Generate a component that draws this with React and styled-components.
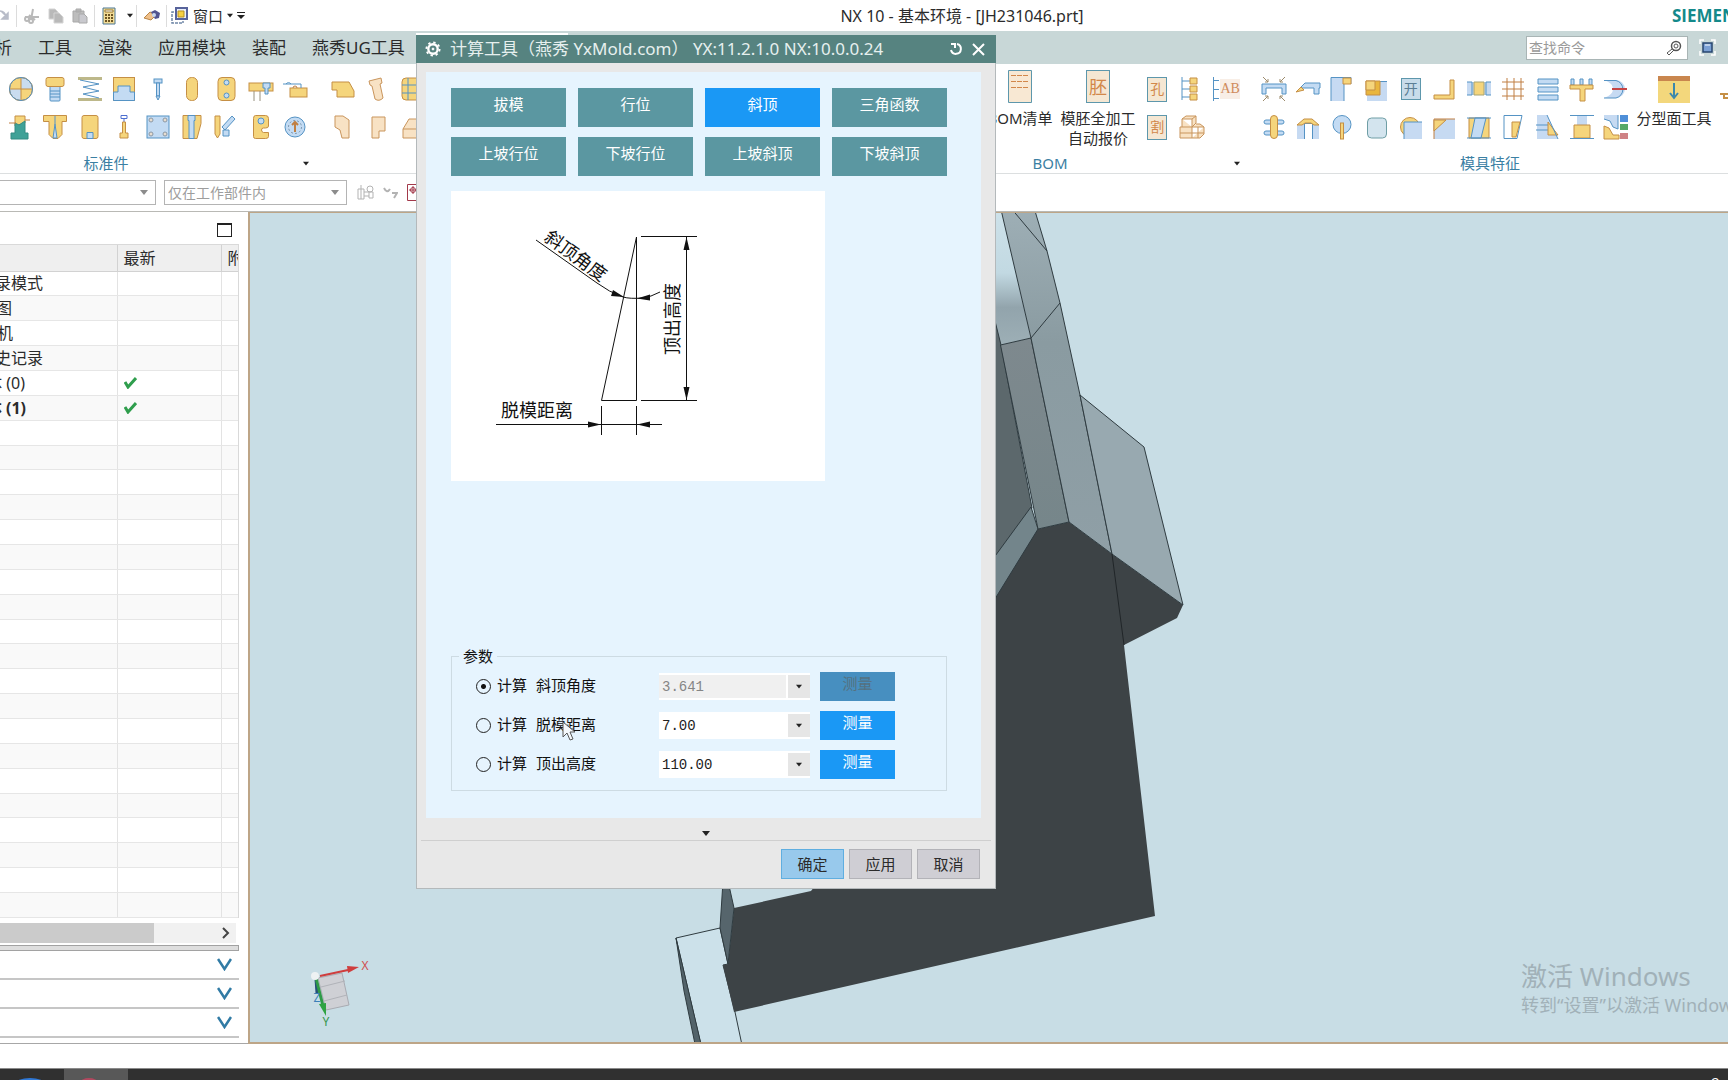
import React from "react";
import styled, { createGlobalStyle, css } from "styled-components";

const GlobalStyle = createGlobalStyle`
  * { box-sizing: border-box; }
  body {
    margin: 0;
    font-family: "Noto Sans", "Noto Sans CJK SC", sans-serif;
    font-size: 15px;
    color: #2b2b2b;
    overflow: hidden;
  }
  button, input, select { font: inherit; color: inherit; margin: 0; }
  svg { display: block; flex: none; }
`;

/* ---------- paint used by the ribbon drawings ---------- */
const Y = { fill: "#f5d57c", stroke: "#c58f45" };
const P = { fill: "#f8e2c4", stroke: "#c9955c" };
const B = { fill: "#c3dbf3", stroke: "#5593c4" };
const BL = { fill: "none", stroke: "#5593c4" };
const OL = { fill: "none", stroke: "#c07f42" };
const BF = { fill: "#c6daf2", stroke: "none" };

const glyphs = {
  circle: <><circle cx="12" cy="12" r="11.5" {...Y} /><path d="M12 .5A11.5 11.5 0 0 1 23.500 12H12zM12 23.500A11.5 11.5 0 0 1 .5 12H12z" fill="#c9dcf0" stroke="#c58f45" /><circle cx="12" cy="12" r="11.5" {...BL} /></>,
  screw: <><rect x="7" y="9" width="10" height="15" rx="1" {...B} /><path d="M7 14h10M7 17h10M7 20h10" {...BL} /><rect x="3" y=".5" width="18" height="9" rx="2" {...Y} /></>,
  spring: <><path d="M0 1.500h24M0 22.500h24" stroke="#bdb88a" strokeWidth="3" /><path d="M2 3l19 4L5 10l16 4L5 17l16 4" {...BL} /></>,
  block: <><rect x="1.500" y=".5" width="21" height="23" {...Y} /><path d="M1.500 23.500V15H6V9h12v6h4.500v8.500z" {...B} /></>,
  pin: <><rect x="8" y="2" width="8" height="4" {...B} /><rect x="10.500" y="6" width="3" height="13" {...B} /><path d="M10 19h4l-2 4z" {...B} /></>,
  pill: <rect x="6.500" y=".5" width="11" height="23" rx="5" {...Y} />,
  plate: <><rect x="4" y=".5" width="17" height="23" rx="4" {...Y} /><circle cx="12.500" cy="5.500" r="2.500" {...B} /><circle cx="12.500" cy="18.500" r="2.500" {...B} /></>,
  clamp: <><rect x="0" y="6" width="24" height="8" {...Y} /><path d="M14 6h7v5h-2v6h-3v-6h-2z" {...B} /><path d="M5 14v10M11 14v10" stroke="#96907e" /></>,
  latch: <><rect x="7" y="11" width="17" height="9" {...Y} /><path d="M0 7h18v4M3 7a3 3 0 0 1 5 0" {...BL} /><path d="M10 11a2 2 0 0 1 4 0" {...OL} /></>,
  support: <><path d="M6 1h10v7l-10 3z" {...Y} /><path d="M6 8l4 2 6-4v12h3v6H2v-6h4z" fill="#3fa197" stroke="#338b83" /><path d="M0 8h7M16 5h5" {...OL} /></>,
  tee: <><path d="M.5 .5h23v6H19v13l-4 4h-5l-4-4v-13H.5z" {...Y} /><path d="M12 1v8l-2 14h4L12 9" {...B} /></>,
  notch: <><rect x="4" y=".5" width="16" height="23" rx="2" {...Y} /><path d="M9 23.500v-6h6v6z" {...B} /></>,
  ejector: <><path d="M9 .5h6v3H9zM12 4v4" fill="none" stroke="#4e6fd0" /><path d="M10.500 7h3v11h2.500v5H8v-5h2.500z" {...Y} /></>,
  bolted: <><rect x="1" y="1" width="22" height="22" {...B} /><g fill="#e7ddd0" stroke="#8b98a5"><circle cx="5" cy="5" r="2" /><circle cx="19" cy="5" r="2" /><circle cx="5" cy="19" r="2" /><circle cx="19" cy="19" r="2" /></g></>,
  wedge: <><path d="M3 .5h18v8l-4 15H3z" {...Y} /><path d="M8 .5h7v5h-1v18H9v-18H8z" {...B} /></>,
  angled: <><path d="M1 1h5v18l-2.500 4L1 19z" {...Y} /><path d="M8 12L18 1l3 3-10 11zM9 15h6v6H9z" {...B} /></>,
  hook: <><path d="M6.500 .5h10a3 3 0 0 1 3 3V11q0 2-3 2h-2q-2 0-2 2t2 2.500h5v4q0 2-3 2h-10q-2 0-2-2v-18q0-3 2-3z" {...Y} /><circle cx="12" cy="6" r="3" {...B} /></>,
  dial: <><circle cx="12" cy="12" r="10" {...B} /><circle cx="12" cy="12" r="6.500" fill="none" stroke="#7d96ad" strokeDasharray="2 2" /><path d="M12 17V7M9 10l3-3 3 3" {...OL} strokeWidth="2" /></>,
  slab: <path d="M1 5h17l5 9v6H6v-7H1z" {...Y} />,
  slantPin: <path d="M3 4l12-3 1 5-2 1 3 14q-4 4-8 1L6 9 4 8z" {...P} />,
  grid: <><rect x="1" y="1" width="24" height="22" rx="4" {...Y} /><path d="M7 1v22M1 8h24M1 16h24" {...BL} /></>,
  jigA: <path d="M4 1h8l6 4v18h-7L9 15l-5-3z" {...P} />,
  jigB: <path d="M6 2h13v14h-6v7H6z" {...P} />,
  jigC: <path d="M2 14L8 4h16v19H2zM2 14h22" {...P} />,
  bomTree: <><path d="M2 0v23M2 4h8M2 12h8M2 20h8" {...BL} /><path d="M10 1h7v6h-7zM10 9h7v6h-7zM10 17h7v6h-7z" {...Y} /></>,
  boxes: <path d="M0 12h12v11H0zM12 12l4-4v-7H6L2 4v8M12 12h12l-4-3h-4M24 12v7l-4 4h-8M2 4h10v8M12 4l4-3M18 12v11M0 18h24" {...P} />,
  span: <><path d="M0 7h24v10h-4v-6H4v6H0z" {...B} /><path d="M1 0l5 5M23 0l-5 5M1 24l5-5M23 24l-5-5M6 2v3H3M18 2v3h3M6 22v-3H3M18 22v-3h3" fill="none" stroke="#9c8b6d" /></>,
  gun: <><path d="M5 10l4-4h15v5h-1v6h-5v-6H5z" {...B} /><path d="M0 15l5-5 3 3z" {...Y} /></>,
  corner: <><path d="M1 0h21v7h-8v17H1z" {...BF} /><path d="M1 24V.5h20M14 24V7" {...BL} /><path d="M13 1h8v6h-8z" {...Y} /></>,
  step: <><path d="M2 4h20v20H2z" {...BF} /><path d="M14 4.500h8" {...BL} /><path d="M1 4h14v14H1z" fill="#e9b63e" stroke="#c58f45" /><path d="M1 4h9v9H1z" {...Y} /></>,
  corn: <><path d="M21 3v19H1v-4h16V3z" {...Y} /></>,
  flange: <><path d="M0 5h24v13H0z" {...BF} /><path d="M7 5h10v13H7z" {...Y} stroke="#a9a472" /><path d="M0 5h5v13H0M24 5h-5v13h5" {...BL} /></>,
  hash: <path d="M6 1v22M13 1v22M20 1v22M1 5h22M1 12h22M1 19h22" {...OL} />,
  bars: <path d="M2 2h20v5H2zM2 10h20v5H2zM2 18h20v5H2z" {...B} />,
  trident: <><path d="M1 2h3v6H1zM10 2h3v6h-3zM19 2h3v6h-3z" {...B} /><path d="M0 8h23v4h-8v12h-5V12H0z" {...Y} /></>,
  nose: <><path d="M0 3h12a9 9 0 0 1 0 18H0q9-3 9-9T0 3z" {...BF} /><path d="M0 3.500h12a9 9 0 0 1 0 17.500H0" {...BL} /><path d="M8 12h15" stroke="#c54545" strokeWidth="2" /></>,
  cross: <><rect x="2" y="5" width="20" height="4" rx="2" {...B} /><rect x="2" y="16" width="20" height="4" rx="2" {...B} /><rect x="8.500" y="0.500" width="7" height="23" rx="3.500" {...Y} /></>,
  arch: <><path d="M1 10L8 5h8l7 5v14h-7V8H9v16H1z" {...BF} /><path d="M8.500 24V8.500h8V24" fill="#fff" stroke="#5593c4" /><path d="M1 10l7-6h8l7 6h-5l-3-2H9l-3 2z" {...Y} /></>,
  knob: <><circle cx="12" cy="9.500" r="9" {...B} /><rect x="10.500" y="8" width="3" height="16" {...Y} /></>,
  rounded: <rect x="2.500" y="3" width="19" height="20" rx="4" fill="#d3e4ee" stroke="#6f9ea5" />,
  ball: <><circle cx="11" cy="12" r="9.500" {...Y} /><path d="M5 7h18v17H5z" {...BF} /><path d="M5 24V7h18" {...BL} /></>,
  chamfer: <><path d="M1 4h21v20H1z" {...BF} /><path d="M1 24V4h21" {...OL} /><path d="M1 5h12L1 16z" {...Y} /></>,
  slant: <><path d="M2 3h20v20H2z" {...Y} /><path d="M8 3h11l-5 20H4z" {...B} /><path d="M0 3h24M0 23h24" {...BL} /></>,
  draft: <><path d="M3 .5h18l-5 23H3z" fill="#fff" stroke="#5593c4" /><path d="M11 7h8l-4 15h-4z" {...Y} /></>,
  prism: <><path d="M1 0h10l11 24H1z" {...BF} /><path d="M0 10h12M0 15h12" {...BL} /><path d="M12 7v13h10z" {...Y} /><path d="M11 0l11 24" {...BL} /></>,
  pedestal: <><path d="M7 1h10v9H7z" {...BF} /><path d="M4 10h16v13H4z" {...Y} /><path d="M0 .5h24M0 23.500h24" {...BL} /></>,
  swatches: <><path d="M0 0h14v14l-5-2-3-6-6-2z" {...BF} /><path d="M0 4l6 2 3 6 5 2V0" {...BL} /><path d="M0 11l5 2 4 7h6v4H0z" {...Y} /><path d="M16 0h8v7h-8z" fill="#4f8fd8" /><path d="M16 9h8v6h-8z" fill="#55a866" /><path d="M16 18h8v6h-8z" fill="#cf8285" /></>,
};

function Glyph({ name, size = 24 }) {
  return <svg width={size} height={size} viewBox="0 0 24 24" strokeWidth="1" overflow="visible" aria-hidden="true">{glyphs[name]}</svg>;
}

const Caret = ({ w = 8, color = "#222" }) => (
  <svg width={w} height="5" viewBox="0 0 8 5" aria-hidden="true"><path d="M0 0h8L4 5z" fill={color} /></svg>
);

/* ---------- shell ---------- */
const Page = styled.div`
  position: relative;
  height: 100vh;
  display: flex;
  flex-direction: column;
  overflow: hidden;
  background: #fff;
`;

const TitleBar = styled.header`
  height: 31px;
  flex: none;
  display: grid;
  grid-template-columns: 1fr auto 1fr;
  align-items: center;
`;
const QuickTools = styled.div`
  display: flex;
  align-items: center;
  height: 22px;
`;
const QuickButton = styled.button`
  border: 0;
  padding: 0;
  background: none;
  width: ${(p) => p.$w}px;
  height: 22px;
  display: flex;
  align-items: center;
  justify-content: center;
  gap: 5px;
  white-space: nowrap;
`;
const QuickRule = styled.i`
  width: 1px;
  height: 22px;
  background: #dcdcdc;
`;
const WindowTitle = styled.h1`
  margin: 0;
  font-size: 16px;
  font-weight: 400;
  line-height: 24px;
  padding-left: 196px;
`;
const Brand = styled.strong`
  justify-self: end;
  width: 56px;
  font: 700 17px/24px "Open Sans", sans-serif;
  color: #14898a;
`;

const MenuBar = styled.nav`
  height: 33px;
  flex: none;
  display: flex;
  align-items: center;
  gap: 26px;
  background: #c8d7d7;
`;
const MenuItem = styled.button`
  border: 0;
  padding: 0;
  background: none;
  font-size: 17px;
  line-height: 24px;
  white-space: nowrap;
  &:first-child { margin-left: -5px; }
`;
const Search = styled.label`
  margin-left: auto;
  width: 162px;
  height: 24px;
  display: flex;
  align-items: center;
  padding: 0 5px 0 2px;
  background: #fff;
  border: 1px solid #a9b5b5;
  input {
    flex: 1;
    min-width: 0;
    border: 0;
    padding: 0;
    font-size: 14px;
    background: none;
  }
  input::placeholder { color: #9a9a9a; opacity: 1; }
`;
const ScreenButton = styled.button`
  border: 0;
  padding: 0;
  margin-left: -15px;
  margin-right: 12px;
  background: none;
`;

/* ---------- ribbon ---------- */
const Ribbon = styled.section`
  height: 110px;
  flex: none;
  display: flex;
  border-bottom: 1px solid #dcdfe0;
  overflow: hidden;
`;
const Group = styled.div`
  flex: ${(p) => (p.$w ? `0 0 ${p.$w}px` : "1 1 0")};
  display: flex;
  flex-direction: column;
  padding-top: 6px;
  position: relative;
  overflow: hidden;
  & + &::before {
    content: "";
    position: absolute;
    left: 0;
    top: 6px;
    bottom: 6px;
    width: 1px;
    background: #dadada;
  }
`;
const Tools = styled.div`
  display: flex;
  height: 80px;
  flex: none;
  padding-left: ${(p) => p.$pad}px;
`;
const IconGrid = styled.div`
  flex: none;
  width: ${(p) => p.$cols * 34 + 2}px;
  display: grid;
  grid-template-columns: repeat(${(p) => p.$cols}, 1fr);
  grid-template-rows: 38px 38px;
`;
const IconButton = styled.button`
  border: 0;
  padding: 0;
  background: none;
  display: grid;
  place-items: center;
`;
const BigButton = styled.button`
  flex: none;
  width: ${(p) => p.$w}px;
  border: 0;
  padding: 0;
  background: none;
  display: flex;
  flex-direction: column;
  align-items: center;
  font-size: 15px;
  line-height: 20px;
  white-space: nowrap;
`;
const BigIcon = styled.span`
  height: 38px;
  display: grid;
  place-items: ${(p) => (p.$low ? "center" : "start center")};
`;
const GroupFoot = styled.div`
  display: grid;
  grid-template-columns: 1fr auto 1fr;
  align-items: center;
  justify-items: end;
  height: 26px;
  flex: none;
  padding: 0 8px;
  margin-left: ${(p) => p.$left}px;
  color: #3b80a3;
  line-height: 20px;
`;
const Foot = styled.span`grid-column: 2;`;
const Sheet = styled.span`
  display: grid;
  place-items: center;
  width: ${(p) => p.$w}px;
  height: ${(p) => p.$h}px;
  border: 1px solid #5d97ac;
  background: ${(p) => (p.$blue ? "#c8dcea" : "#f5e7d3")};
  color: ${(p) => (p.$blue ? "#5c7f95" : "#d2874a")};
  font-size: ${(p) => p.$w - 6}px;
  line-height: 1;
`;
const SheetLabel = styled.span`
  font: 14px/20px "Liberation Serif", serif;
  color: #cf8b5c;
  background: #f8eee6;
`;
const AbWrap = styled.span`
  display: flex;
  align-items: center;
  gap: 1px;
`;

/* ---------- selection bar ---------- */
const SelectionBar = styled.div`
  height: 37px;
  flex: none;
  display: flex;
  align-items: center;
  gap: 8px;
`;
const Picker = styled.label`
  display: grid;
  align-items: center;
  width: ${(p) => p.$w}px;
  height: 25px;
  border: 1px solid #b4b4b4;
  ${(p) => p.$open && css`border-left: 0;`}
  > * { grid-area: 1 / 1; }
  > svg { justify-self: end; margin-right: 7px; pointer-events: none; }
  select {
    appearance: none;
    width: 100%;
    height: 100%;
    border: 0;
    padding: 0 3px;
    background: none;
    font-size: 14px;
    color: #9d9d9d;
  }
`;
const SelectionIcons = styled.div`
  display: flex;
  align-items: center;
  gap: 9px;
  padding-left: 2px;
`;

/* ---------- workspace ---------- */
const Workspace = styled.main`
  flex: 1;
  min-height: 0;
  display: flex;
  border-top: 1px solid #b9b9b5;
`;
const SidePanel = styled.aside`
  width: 248px;
  flex: none;
  display: flex;
  flex-direction: column;
  padding-right: 9px;
  border-bottom: 1px solid #a7a7a7;
`;
const PanelTop = styled.div`
  height: 32px;
  flex: none;
  display: flex;
  justify-content: flex-end;
  align-items: center;
  padding: 4px 7px 0 0;
`;
const MaxButton = styled.button`
  width: 15px;
  height: 14px;
  padding: 0;
  background: none;
  border: 1px solid #222;
  border-top-width: 2px;
`;
const TreeBox = styled.div`
  flex: 1;
  min-height: 0;
  border-top: 1px solid #d9d9d9;
  border-right: 1px solid #d9d9d9;
  overflow: hidden;
`;
const Tree = styled.table`
  width: 100%;
  height: 100%;
  table-layout: fixed;
  border-collapse: collapse;
  font-size: 16px;
  line-height: 20px;
  th, td {
    padding: 0;
    border-right: 1px solid #e3e3e3;
    border-bottom: 1px solid #e6e6e6;
    overflow: hidden;
    white-space: nowrap;
    text-align: left;
    font-weight: 400;
  }
  th:last-child, td:last-child { border-right: 0; }
  th { height: 26px; background: #efefef; padding-left: 6px; border-color: #d2d2d2; }
  td { height: 24px; padding-left: 6px; }
  td:first-child { padding: 0; }
  tbody tr:nth-child(even) { background: #f9f9f9; }
`;
const TreeLabel = styled.span`
  display: flex;
  justify-content: flex-end;
  width: ${(p) => p.$end}px;
  font-weight: ${(p) => (p.$active ? 700 : 400)};
`;
const ScrollTrack = styled.div`
  height: 20px;
  flex: none;
  margin: 5px 3px 2px 0;
  display: flex;
  align-items: center;
  justify-content: space-between;
  background: #f1f1f1;
  padding-right: 6px;
`;
const ScrollThumb = styled.span`
  width: 154px;
  height: 20px;
  background: #cbcbcb;
`;
const Splitter = styled.div`
  height: 6px;
  flex: none;
  background: #dedede;
  border: solid #a2a2a2;
  border-width: 1px 1px 1px 0;
`;
const Section = styled.button`
  flex: none;
  height: 29px;
  border: 0;
  border-bottom: 2px solid #c6c6c6;
  background: none;
  padding: 0 7px 0 0;
  display: flex;
  align-items: center;
  justify-content: flex-end;
  &:last-child { margin-bottom: 5px; }
`;
const Viewport = styled.div`
  position: relative;
  flex: 1;
  min-width: 0;
  border: 2px solid #bda587;
  border-width: 1px 0 2px 2px;
  background: #c8dde5;
  overflow: hidden;
  > svg { width: 100%; height: 100%; }
`;
const Watermark = styled.p`
  position: absolute;
  left: calc(100% - 207px);
  bottom: 25px;
  margin: 0;
  white-space: nowrap;
  color: #a1b1b8;
  font-size: 18px;
  line-height: 24px;
  strong { display: block; font-weight: 400; font-size: 26px; line-height: 34px; }
`;
const StatusBar = styled.div`
  height: 24px;
  flex: none;
`;
const TaskBar = styled.footer`
  height: 12px;
  flex: none;
  display: flex;
  align-items: flex-start;
  background: #303030;
  border-top: 1px solid #8a8a8a;
  overflow: hidden;
`;
const Task = styled.button`
  width: 64px;
  height: 11px;
  border: 0;
  padding: 0;
  overflow: hidden;
  background: ${(p) => (p.$on ? "#585858" : "none")};
`;
const Clock = styled.time`
  margin-left: auto;
  width: 17px;
  padding-top: 3px;
  color: #fff;
  font-size: 15px;
  line-height: 20px;
`;

/* ---------- dialog ---------- */
const Dialog = styled.section`
  position: absolute;
  left: 416px;
  top: 35px;
  width: 580px;
  display: flex;
  flex-direction: column;
  background: #e8e8e8;
  box-shadow: inset 0 0 0 1px #b4b9bb;
  font-size: 15px;
  line-height: 20px;
  &::before {
    content: "";
    position: absolute;
    left: 0;
    bottom: 100%;
    width: 152px;
    height: 2px;
    background: #fff;
  }
`;
const DialogHead = styled.header`
  height: 28px;
  display: flex;
  align-items: center;
  gap: 9px;
  padding: 0 11px 0 9px;
  background: #568380;
  color: #e6f0ef;
  h2 {
    flex: 1;
    margin: 0;
    font-size: 17px;
    line-height: 24px;
    font-weight: 400;
    white-space: pre;
  }
`;
const HeadButton = styled.button`
  border: 0;
  padding: 0;
  background: none;
`;
const DialogPanel = styled.div`
  margin: 9px 15px 0 10px;
  padding: 16px 34px 27px 25px;
  background: #e6f4fe;
`;
const TabGrid = styled.div`
  display: grid;
  grid-template-columns: repeat(4, 1fr);
  grid-auto-rows: 39px;
  gap: 10px 12px;
`;
const Tab = styled.button`
  border: 0;
  padding: 0 0 7px;
  background: ${(p) => (p.$on ? "#1a98f5" : "#5b97a1")};
  color: #fff;
`;
const Figure = styled.figure`
  margin: 15px 0 0;
  width: 374px;
  height: 290px;
  background: #fff;
`;
const Params = styled.fieldset`
  margin: 165px 0 0;
  min-width: 0;
  padding: 6px 0 11px 24px;
  border: 1px solid #cddbe3;
  display: grid;
  grid-auto-rows: 29px;
  row-gap: 10px;
  legend {
    margin-left: -17px;
    padding: 0 4px;
    color: #111;
  }
`;
const ParamRow = styled.div`
  display: grid;
  grid-template-columns: 183px 151px 75px;
  align-items: center;
  > :last-child { margin-left: 10px; width: 75px; }
`;
const RadioLabel = styled.label`
  display: flex;
  align-items: center;
  color: #111;
  gap: 9px;
  span { padding-bottom: 4px; }
`;
const Radio = styled.input.attrs({ type: "radio" })`
  appearance: none;
  width: 15px;
  height: 15px;
  margin-right: -3px !important;
  border: 1px solid #222;
  border-radius: 50%;
  &:checked { background: radial-gradient(circle, #111 2px, transparent 3px); }
`;
const Combo = styled.div`
  display: flex;
  height: 27px;
  padding: 2px 0;
  background: #fff;
  input {
    flex: 1;
    min-width: 0;
    border: 0;
    padding: 0 3px;
    background: #fff;
    color: #222;
    font: 14px/22px "Liberation Mono", monospace;
  }
  input:disabled { background: #f0f0f0; color: #858585; }
  button {
    width: 22px;
    border: 0;
    padding: 0;
    margin-left: 2px;
    background: #e6e6e6;
    display: grid;
    place-items: center;
  }
`;
const Measure = styled.button`
  height: 29px;
  border: 0;
  padding: 0 0 7px;
  background: #1a98f5;
  color: #fff;
  &:disabled { background: #478fc0; color: #55717f; }
`;
const Expander = styled.button`
  height: 23px;
  margin: 0 5px;
  border: 0;
  border-bottom: 1px solid #cfcfcf;
  padding: 8px 0 0;
  background: none;
  display: grid;
  place-items: center;
`;
const Actions = styled.div`
  display: flex;
  justify-content: flex-end;
  gap: 5px;
  padding: 8px 16px 10px;
`;
const Action = styled.button`
  width: 63px;
  height: 30px;
  padding: 0;
  border: 1px solid ${(p) => (p.$main ? "#5faee0" : "#b3b3b8")};
  background: ${(p) => (p.$main ? "#98c9ec" : "#cfced4")};
`;
const Pointer = styled.svg`
  position: absolute;
  left: 146px;
  top: 686px;
  pointer-events: none;
`;

/* ---------- content ---------- */
const standard = ["circle", "screw", "spring", "block", "pin", "pill", "plate", "clamp", "latch", "support", "tee", "notch", "ejector", "bolted", "wedge", "angled", "hook", "dial"];
const casting = ["slab", "slantPin", "grid", "jigA", "jigB", "jigC"];
const features = ["span", "gun", "corner", "step", null, "corn", "flange", "hash", "bars", "trident", "nose", "cross", "arch", "knob", "rounded", "ball", "chamfer", "slant", "draft", "prism", "pedestal", "swatches"];
const menus = ["析", "工具", "渲染", "应用模块", "装配", "燕秀UG工具"];
const tabs = ["拔模", "行位", "斜顶", "三角函数", "上坡行位", "下坡行位", "上坡斜顶", "下坡斜顶"];
const treeRows = [
  { text: "录模式", end: 43 },
  { text: "图", end: 12 },
  { text: "机", end: 13 },
  { text: "史记录", end: 43 },
  { text: "体 (0)", end: 25, ok: true },
  { text: "体 (1)", end: 26, ok: true, active: true },
];
const params = [
  { id: "angle", name: "斜顶角度", value: "3.641" },
  { id: "distance", name: "脱模距离", value: "7.00" },
  { id: "height", name: "顶出高度", value: "110.00" },
];

function QuickBar() {
  return (
    <QuickTools>
      <QuickButton $w={16} aria-label="重做"><svg width="16" height="16"><path d="M0 3q5 0 6 6M8 5v6H2z" fill="#b8bcc8" stroke="#b8bcc8" strokeWidth="1.500" /></svg></QuickButton>
      <QuickRule />
      <QuickButton $w={29} aria-label="剪切"><svg width="16" height="16" fill="none" stroke="#b9b9b9" strokeWidth="2"><path d="M1 9h14M9 1L7 12M5 7l6 5" /><circle cx="3" cy="11" r="2" /><circle cx="7" cy="13" r="2" /></svg></QuickButton>
      <QuickButton $w={20} aria-label="复制"><svg width="16" height="16" fill="#b9b9b9" stroke="#d4d4d4"><path d="M1 1h6l3 3v7H1z" /><path d="M6 5h5l4 4v6H6z" /></svg></QuickButton>
      <QuickButton $w={28} aria-label="粘贴"><svg width="16" height="16" fill="#bdbdbd" stroke="#a9a9a9"><path d="M1 3h11v11H1zM4 1h5v3H4z" /><path d="M7 6h5l3 3v6H7z" fill="#c9c9ce" /></svg></QuickButton>
      <QuickRule />
      <QuickButton $w={28} aria-label="计算器"><svg width="14" height="18"><path d="M1 1h12v16H1z" fill="#f3dc96" stroke="#4d7896" /><path d="M3 3h8v2H3z" fill="#fff" stroke="#9b7a30" /><path d="M3 8h8M3 11h8M3 14h8" stroke="#6d5623" strokeWidth="2" strokeDasharray="2 1" /></svg></QuickButton>
      <QuickButton $w={13} aria-label="更多计算"><Caret w={6} /></QuickButton>
      <QuickRule />
      <QuickButton $w={29} aria-label="橡皮"><svg width="18" height="14"><path d="M1 9l6-6 6 3-5 5z" fill="#f0c089" stroke="#b98547" /><path d="M8 3l4-2 5 3-1 5-4 1z" fill="#53548f" /><circle cx="11" cy="6" r="2" fill="#c9d6ee" /></svg></QuickButton>
      <QuickRule />
      <QuickButton $w={60}>
        <svg width="17" height="17" fill="none"><path d="M5 1h11v11H5z" stroke="#57639b" strokeWidth="2" fill="#eaf0fa" /><path d="M7 4h6v6H7z" fill="#f5d042" stroke="#b89120" /><path d="M3 5H1v11h11v-2" stroke="#7088a8" strokeWidth="1.500" strokeDasharray="3 1" /></svg>
        窗口
      </QuickButton>
      <QuickButton $w={6} aria-label="窗口列表"><Caret w={6} /></QuickButton>
      <QuickButton $w={16} aria-label="自定义"><svg width="8" height="8"><path d="M0 .5h8" stroke="#222" /><path d="M0 3h8L4 7z" fill="#222" /></svg></QuickButton>
    </QuickTools>
  );
}

function Diagram() {
  return (
    <svg width="374" height="290" viewBox="0 0 374 290" fill="none" stroke="#111" role="img" aria-label="斜顶计算示意图">
      <path d="M185.500 46V209.500H150.500z" />
      <path d="M190 45.500h56M190 209.500h56M235.500 46v164" />
      <path d="M150.500 215v29M185.500 215v29M45 233.500h166" />
      <path d="M85 49L146 92Q158 101 172 106Q179 108 191 107Q200 106 209 101" />
      <g fill="#111" stroke="none">
        <path d="M235.500 46l3 13h-6zM235.500 209l3-13h-6z" />
        <path d="M150 233.500l-13-3v6zM186 233.500l13-3v6z" />
        <path d="M173 106l-13-1 2-6zM186 107.500l13-4v6z" />
        <g fontSize="18" textAnchor="middle">
          <text x="86" y="226">脱模距离</text>
          <text transform="translate(228 128) rotate(-90)">顶出高度</text>
          <text transform="translate(121 70) rotate(36)">斜顶角度</text>
        </g>
      </g>
    </svg>
  );
}

function Scene() {
  return (
    <svg viewBox="250 212 1478 830" preserveAspectRatio="xMinYMin slice" role="img" aria-label="零件模型">
      <defs>
        <linearGradient id="sheen" x1="0" y1="0" x2="0" y2="1">
          <stop offset="0" stopColor="#cfe3eb" /><stop offset=".5" stopColor="#c2d9e2" /><stop offset=".74" stopColor="#92a4ac" /><stop offset="1" stopColor="#9dafb6" />
        </linearGradient>
        <linearGradient id="side" x1="0" y1="0" x2="0" y2="1">
          <stop offset="0" stopColor="#7e898e" /><stop offset="1" stopColor="#76868a" />
        </linearGradient>
        <linearGradient id="face" x1="0" y1="0" x2="0" y2="1">
          <stop offset="0" stopColor="#9fb0b7" /><stop offset=".4" stopColor="#8a9ba1" /><stop offset="1" stopColor="#8f9fa6" />
        </linearGradient>
      </defs>
      <g stroke="#2f3b40" strokeWidth="1" strokeLinejoin="round">
        <path d="M676 937l44-10 8 36-5 1 12 47 7 33h-41z" fill="#cce1ea" />
        <path d="M676 937l25 106h-6l-11-53z" fill="#53636a" />
        <path d="M960 528h78l31-7 43 32 71 51-6 13-53 27 31 271-421 96-11-47 5-1 6-56 77-17 150-191z" fill="#3d4346" stroke="none" />
        <path d="M990 200h9l32 137-31 7-10-20z" fill="url(#sheen)" stroke="none" />
        <path d="M990 300l11 44 31 163-41 55z" fill="#5c686c" />
        <path d="M1031 506l7 22-48 78v-44z" fill="#73858b" />
        <path d="M1000.500 344l30.500-7 38 184-31 7z" fill="url(#side)" />
        <path d="M999 200h33l15 50 13 52 20 92 32 159-43-32-38-184z" fill="url(#face)" />
        <path d="M1005 200l42 50M1060 302l-29 35" fill="none" />
        <path d="M1080 394l64 52 39 158-71-51z" fill="#98a9b0" />
        <path d="M1112 553l12 91" fill="none" stroke="#202528" />
        <path d="M723 880h5l6 27-6 56-8-36z" fill="#56656c" />
      </g>
      <path d="M318 977l24-5 7 32-23 5z" fill="#cfd0d5" stroke="#a9abb2" />
      <path d="M321 986l24-6M324 1000l23-6" stroke="#b1b3b9" />
      <path d="M316 978l1 14" stroke="#274f7b" strokeWidth="3" />
      <path d="M320 975l28-6" stroke="#cf3d3d" strokeWidth="2" />
      <path d="M347 965l12 1-11 6z" fill="#cf3d3d" />
      <path d="M316 977l7 28" stroke="#2f9a47" strokeWidth="3" />
      <path d="M319 1003l7-1v13z" fill="#2fa342" />
      <circle cx="315" cy="975" r="4" fill="#eef2f3" />
      <g fontSize="12" textAnchor="middle">
        <text x="365" y="969" fill="#d05050">X</text>
        <text x="326" y="1025" fill="#35964d">Y</text>
        <text x="317" y="1001" fill="#3c80b8">Z</text>
      </g>
    </svg>
  );
}

function CalcDialog() {
  const [mode, setMode] = React.useState("angle");
  const [tab, setTab] = React.useState("斜顶");
  return (
    <Dialog role="dialog" aria-labelledby="calc-title">
      <DialogHead>
        <svg width="16" height="16" viewBox="0 0 17 17" fill="none" stroke="#fff"><circle cx="8.500" cy="8.500" r="5" strokeWidth="2.500" /><circle cx="8.500" cy="8.500" r="7" strokeWidth="2" strokeDasharray="2.500 3" /><circle cx="8.500" cy="8.500" r="1" fill="#fff" /></svg>
        <h2 id="calc-title">计算工具（燕秀 YxMold.com） YX:11.2.1.0 NX:10.0.0.24</h2>
        <HeadButton aria-label="重置"><svg width="14" height="16" fill="none" stroke="#fff" strokeWidth="2"><path d="M8 3a5 5 0 1 1-6 6M2 3h4v4" /></svg></HeadButton>
        <HeadButton aria-label="关闭"><svg width="13" height="13" stroke="#fff" strokeWidth="2"><path d="M1 1l11 11M12 1L1 12" /></svg></HeadButton>
      </DialogHead>
      <DialogPanel>
        <TabGrid>
          {tabs.map((t) => <Tab key={t} $on={t === tab} onClick={() => setTab(t)}>{t}</Tab>)}
        </TabGrid>
        <Figure><Diagram /></Figure>
        <Params>
          <legend>参数</legend>
          {params.map((p) => (
            <ParamRow key={p.id}>
              <RadioLabel>
                <Radio name="mode" checked={mode === p.id} onChange={() => setMode(p.id)} />
                <span>计算</span><span>{p.name}</span>
              </RadioLabel>
              <Combo>
                <input aria-label={p.name} defaultValue={p.value} disabled={mode === p.id} />
                <button aria-label={`${p.name}选项`}><Caret w={6} /></button>
              </Combo>
              <Measure disabled={mode === p.id}>测量</Measure>
            </ParamRow>
          ))}
        </Params>
      </DialogPanel>
      <Expander aria-label="展开"><Caret w={10} /></Expander>
      <Actions>
        <Action $main>确定</Action>
        <Action>应用</Action>
        <Action>取消</Action>
      </Actions>
      <Pointer width="14" height="20" viewBox="0 0 14 20"><path d="M1 1v15l4-4 3 7 3-1-3-7h5z" fill="#f4f8fb" stroke="#555" /></Pointer>
    </Dialog>
  );
}

export default function App() {
  return (
    <Page>
      <GlobalStyle />
      <TitleBar>
        <QuickBar />
        <WindowTitle>NX 10 - 基本环境 - [JH231046.prt]</WindowTitle>
        <Brand>SIEMENS</Brand>
      </TitleBar>
      <MenuBar>
        {menus.map((m) => <MenuItem key={m}>{m}</MenuItem>)}
        <Search>
          <input placeholder="查找命令" aria-label="查找命令" />
          <svg width="16" height="16" fill="none" stroke="#555"><circle cx="10" cy="6" r="4.500" strokeWidth="1.500" /><circle cx="10" cy="6" r="2" /><path d="M6 9l-5 4 2 2 5-5" /></svg>
        </Search>
        <ScreenButton aria-label="全屏"><svg width="17" height="17" fill="none"><path d="M1 5V1h4M12 1h4v4M16 12v4h-4M5 16H1v-4" stroke="#fff" strokeWidth="1.500" /><path d="M4 4h9v9H4z" fill="#7ba0d4" stroke="#27456f" strokeWidth="1.500" /><path d="M6 6h5" stroke="#fff" /></svg></ScreenButton>
      </MenuBar>
      <Ribbon>
        <Group $w={317}>
          <Tools $pad={4}>
            <IconGrid $cols={9}>{standard.map((n) => <IconButton key={n} aria-label={n}><Glyph name={n} /></IconButton>)}</IconGrid>
          </Tools>
          <GroupFoot $left={-105}><Foot>标准件</Foot><Caret w={6} /></GroupFoot>
        </Group>
        <Group>
          <Tools $pad={9}>
            <IconGrid $cols={3}>{casting.map((n) => <IconButton key={n} aria-label={n}><Glyph name={n} /></IconButton>)}</IconGrid>
          </Tools>
        </Group>
        <Group $w={270}>
          <Tools $pad={6}>
            <BigButton $w={72}>
              <BigIcon><svg width="24" height="33"><path d="M.5 .5h23v32H.5z" fill="#f8e8d3" stroke="#5d97ac" /><path d="M3 5.500h18M3 11.500h18M3 17.500h18" stroke="#d2874a" strokeDasharray="5 1" /></svg></BigIcon>
              BOM清单
            </BigButton>
            <BigButton $w={84}>
              <BigIcon><Sheet $w={24} $h={33}>胚</Sheet></BigIcon>
              <span>模胚全加工<br />自动报价</span>
            </BigButton>
            <IconGrid $cols={3}>
              <IconButton><Sheet $w={20} $h={25}>孔</Sheet></IconButton>
              <IconButton aria-label="bomTree"><Glyph name="bomTree" /></IconButton>
              <IconButton><AbWrap><svg width="6" height="24" fill="none" stroke="#5593c4"><path d="M.5 0v24M0 3.500h6M0 12.500h6M0 21.500h6" /></svg><SheetLabel>AB</SheetLabel></AbWrap></IconButton>
              <IconButton><Sheet $w={20} $h={25}>割</Sheet></IconButton>
              <IconButton aria-label="boxes"><Glyph name="boxes" /></IconButton>
            </IconGrid>
          </Tools>
          <GroupFoot $left={-126}><Foot>BOM</Foot><Caret w={6} /></GroupFoot>
        </Group>
        <Group $w={480}>
          <Tools $pad={9}>
            <IconGrid $cols={11}>
              {features.map((n) => <IconButton key={n || "open"} aria-label={n || undefined}>{n ? <Glyph name={n} /> : <Sheet $w={20} $h={22} $blue>开</Sheet>}</IconButton>)}
            </IconGrid>
            <BigButton $w={82}>
              <BigIcon $low><svg width="32" height="27"><path d="M0 0h32v27H0z" fill="#f3d77c" /><path d="M0 0h32v5H0z" fill="#c9864e" /><path d="M16 7v14M12 17l4 5 4-5" fill="none" stroke="#3c88ad" strokeWidth="2" /></svg></BigIcon>
              分型面工具
            </BigButton>
            <IconButton aria-label="more"><svg width="16" height="34"><path d="M5 1h11M9 1v4h6" stroke="#c58f45" strokeWidth="2" fill="none" /></svg></IconButton>
          </Tools>
          <GroupFoot $left={4}><Foot>模具特征</Foot></GroupFoot>
        </Group>
      </Ribbon>
      <SelectionBar>
        <Picker $w={156} $open><select aria-label="选择类型"><option></option></select><Caret color="#8c8c8c" /></Picker>
        <Picker $w={183}><select aria-label="选择范围"><option>仅在工作部件内</option></select><Caret color="#8c8c8c" /></Picker>
        <SelectionIcons>
          <svg width="17" height="17" fill="none" stroke="#b3b3b3"><path d="M1 5h6v10H1zM4 1v14M7 8h5M7 12h5" /><circle cx="13" cy="5" r="3" /><path d="M12 8h4v6h-4z" /></svg>
          <svg width="15" height="15" fill="none" stroke="#b3b3b3" strokeWidth="2"><path d="M1 3q3 6 6 1M9 8h5l-3 5" /></svg>
          <svg width="17" height="17" fill="none" stroke="#a2394a"><path d="M.5 .5h16v16H.5zM2 6h8M6 2v8" /><circle cx="6" cy="6" r="2.500" /></svg>
        </SelectionIcons>
      </SelectionBar>
      <Workspace>
        <SidePanel>
          <PanelTop><MaxButton aria-label="最大化" /></PanelTop>
          <TreeBox>
            <Tree>
              <colgroup><col style={{ width: 117 }} /><col style={{ width: 104 }} /><col /></colgroup>
              <thead><tr><th /><th>最新</th><th>附注</th></tr></thead>
              <tbody>
                {Array.from({ length: 26 }, (_, i) => treeRows[i] || {}).map((r, i) => (
                  <tr key={i}>
                    <td>{r.text && <TreeLabel $end={r.end} $active={r.active}>{r.text}</TreeLabel>}</td>
                    <td>{r.ok && <svg width="13" height="13"><path d="M1 6l3 5 8-9" fill="none" stroke="#2f9e4d" strokeWidth="3" /></svg>}</td>
                    <td />
                  </tr>
                ))}
              </tbody>
            </Tree>
          </TreeBox>
          <ScrollTrack><ScrollThumb /><svg width="8" height="12"><path d="M1 1l5 5-5 5" fill="none" stroke="#444" strokeWidth="2" /></svg></ScrollTrack>
          <Splitter />
          {["a", "b", "c"].map((k) => (
            <Section key={k} aria-label="展开"><svg width="15" height="13"><path d="M1 1l6.500 10L14 1" fill="none" stroke="#317ba5" strokeWidth="2.500" /></svg></Section>
          ))}
        </SidePanel>
        <Viewport>
          <Scene />
          <Watermark><strong>激活 Windows</strong>转到“设置”以激活 Windows。</Watermark>
        </Viewport>
      </Workspace>
      <StatusBar />
      <TaskBar>
        <Task aria-label="浏览器"><svg width="64" height="11"><ellipse cx="30" cy="15" rx="15" ry="6" fill="#2f78d6" /></svg></Task>
        <Task $on aria-label="NX"><svg width="64" height="11"><ellipse cx="25" cy="14" rx="9" ry="5" fill="#b1485f" /></svg></Task>
        <Clock>9:</Clock>
      </TaskBar>
      <CalcDialog />
    </Page>
  );
}
